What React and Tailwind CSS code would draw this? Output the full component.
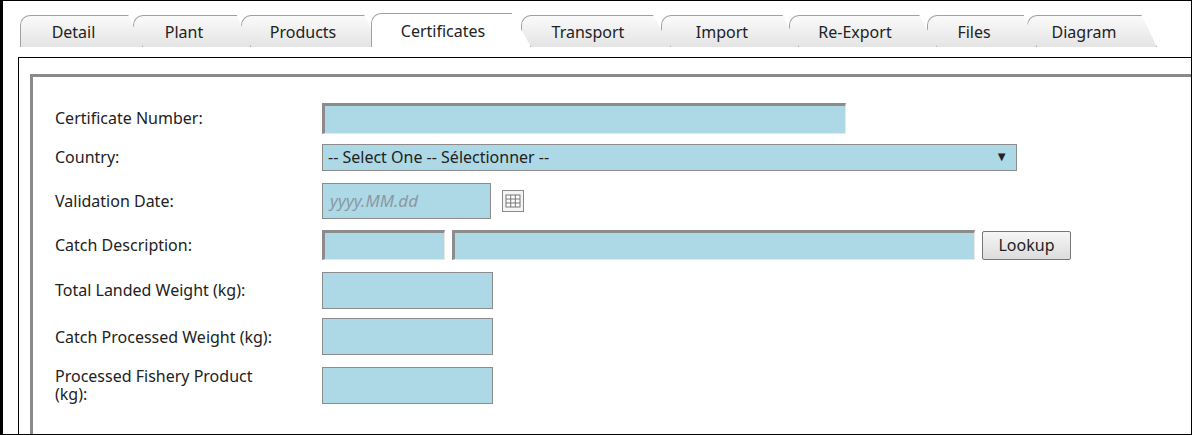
import React from 'react'

const tabs = ['Detail', 'Plant', 'Products', 'Certificates', 'Transport', 'Import', 'Re-Export', 'Files', 'Diagram']
const widths = [123, 118, 140, 160, 150, 138, 148, 110, 130]

const Inset = ({ className = '' }) => (
    <div className={`h-full bg-[#add8e6] border-t-[3px] border-l-[3px] border-t-[#8c8c8c] border-l-[#8c8c8c] border-b border-r border-b-[#e8e8e8] border-r-[#e8e8e8] ${className}`} />
)

const Row = ({ label, h, children }) => (
    <div className="flex items-center" style={{ height: h }}>
        <div className="w-[267px] leading-[18px]">{label}</div>
        {children}
    </div>
)

const App = () => (
    <div className="w-[1192px] h-[435px] border border-black border-l-[3px] border-l-black bg-white overflow-hidden font-['Liberation_Sans'] text-[16px] text-[#222]">
        <div className="flex items-end h-[46px] pl-[17px]">
            {tabs.map((t, i) => (
                <div
                    key={t}
                    style={{ width: widths[i], marginLeft: i ? -10 : 0, zIndex: t === 'Certificates' ? 10 : 9 - i }}
                    className={`relative h-[32px] rounded-tl-[10px] border border-b-0 border-[#a0a0a0] [clip-path:polygon(0_0,88%_0,100%_100%,0_100%)] pr-[16px] flex items-center justify-center font-['Open_Sans'] text-[16px] ${t === 'Certificates' ? 'bg-white h-[34px]' : 'bg-gradient-to-b from-[#fafafa] to-[#e4e4e4]'}`}
                >
                    {t}
                </div>
            ))}
        </div>
        <div className="ml-[15px] mt-[10px] border-t border-l border-black pt-[16px] pl-[11px] h-full">
            <div className="border-t-[3px] border-l-[3px] border-[#8a8a8a] pt-[24px] pl-[22px] h-full">
                <Row label="Certificate Number:" h={34}>
                    <div className="w-[524px] h-[31px]"><Inset /></div>
                </Row>
                <Row label="Country:" h={44}>
                    <div className="w-[695px] h-[27px] bg-[#add8e6] border border-[#8c8c8c] flex items-center justify-between px-[5px]">
                        <span>-- Select One -- Sélectionner --</span>
                        <span className="text-[13px] mr-[3px]">▼</span>
                    </div>
                </Row>
                <Row label="Validation Date:" h={44}>
                    <div className="w-[169px] h-[36px] bg-[#add8e6] border border-[#8c8c8c] flex items-center px-[7px] italic text-[#8a9aa3] font-['Open_Sans'] text-[17px]">yyyy.MM.dd</div>
                    <svg width="24" height="24" viewBox="0 0 24 24" className="ml-[10px]">
                        <rect x="1.5" y="1.5" width="21" height="21" fill="#f4f4f4" stroke="#8a8a8a" />
                        <rect x="5" y="6" width="14" height="12" fill="#fff" stroke="#777" />
                        <path d="M5 10h14M5 14h14M9.7 6v12M14.3 6v12" stroke="#777" />
                    </svg>
                </Row>
                <Row label="Catch Description:" h={44}>
                    <div className="w-[123px] h-[30px]"><Inset /></div>
                    <div className="w-[523px] h-[30px] ml-[7px]"><Inset /></div>
                    <button className="ml-[7px] w-[89px] h-[29px] border border-[#777] rounded-[2px] bg-gradient-to-b from-[#f6f6f6] to-[#dcdcdc]">Lookup</button>
                </Row>
                <Row label="Total Landed Weight (kg):" h={46}>
                    <div className="w-[171px] h-[37px] bg-[#add8e6] border border-[#8c8c8c]" />
                </Row>
                <Row label="Catch Processed Weight (kg):" h={47}>
                    <div className="w-[171px] h-[37px] bg-[#add8e6] border border-[#8c8c8c]" />
                </Row>
                <Row label={<>Processed Fishery Product<br />(kg):</>} h={50}>
                    <div className="w-[171px] h-[37px] bg-[#add8e6] border border-[#8c8c8c]" />
                </Row>
            </div>
        </div>
    </div>
)

export default App
